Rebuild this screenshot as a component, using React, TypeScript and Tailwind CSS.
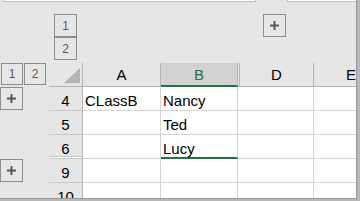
import React from 'react';

// small outline-level button (1 / 2)
const LevelBox = ({ label, size = 'w-[22px] h-[22px]' }: { label: string; size?: string }) => (
  <div className={`${size} shrink-0 border border-[#8c8c8c] flex items-center justify-center text-[12px] leading-none text-[#5a5a5a]`}>
    {label}
  </div>
);

// expand button (+)
const PlusBox = ({ size = 'w-[23px] h-[23px]' }: { size?: string }) => (
  <div className={`${size} shrink-0 border border-[#8c8c8c] flex items-center justify-center`}>
    <svg width="9" height="9" viewBox="0 0 9 9">
      <rect x="3.5" y="0" width="2" height="9" fill="#595959" />
      <rect x="0" y="3.5" width="9" height="2" fill="#595959" />
    </svg>
  </div>
);

type Row = { num: string; a: string; b: string; gutter?: boolean; hiddenBelow?: boolean; selected?: boolean };

const rows: Row[] = [
  { num: '4', a: 'CLassB', b: 'Nancy', gutter: true },
  { num: '5', a: '', b: 'Ted' },
  { num: '6', a: '', b: 'Lucy', hiddenBelow: true, selected: true },
  { num: '9', a: '', b: '', gutter: true },
  { num: '10', a: '', b: '' },
];

export default function App() {
  return (
    <div className="w-[360px] h-[201px] bg-[#b8b8b8] overflow-hidden font-['Liberation_Sans',Arial,sans-serif]">
      <div className="w-[357px] h-[199px] bg-[#e6e6e6] border-r border-b border-[#9a9a9a] overflow-hidden flex flex-col">
        {/* top strip */}
        <div className="flex h-[2px] shrink-0">
          <div className="ml-[3px] w-[253px] bg-white border-x border-b border-[#bfbfbf]" />
          <div className="ml-[31px] flex-1 bg-white border-l border-b border-[#bfbfbf]" />
        </div>

        {/* column outline bar */}
        <div className="flex items-start h-[61px] pt-[12px] shrink-0">
          <div className="ml-[54px] flex flex-col">
            <LevelBox label="1" size="w-[23px] h-[23px]" />
            <LevelBox label="2" size="w-[23px] h-[23px]" />
          </div>
          <div className="ml-[186px]">
            <PlusBox />
          </div>
        </div>

        {/* header row */}
        <div className="flex h-[24px] shrink-0 text-[15px] leading-[17px]">
          <div className="w-[49px] shrink-0 flex items-start gap-[1px] pl-[1px]">
            <LevelBox label="1" />
            <LevelBox label="2" />
          </div>
          <div className="w-[34px] shrink-0 border-r border-b border-[#b4b4b4] flex justify-end items-end pr-[2px] pb-[3px]">
            <svg width="16" height="15" viewBox="0 0 16 15">
              <polygon points="0,15 16,0 16,15" fill="#b4b4b4" />
            </svg>
          </div>
          <div className="w-[78px] shrink-0 border-r border-b border-[#b4b4b4] flex justify-center items-end pb-[3px] text-black">A</div>
          <div className="w-[77px] shrink-0 bg-[#d2d2d2] border-r border-b-2 border-r-[#b4b4b4] border-b-[#217346] flex justify-center items-end pb-[2px] text-[#217346]">B</div>
          <div className="w-[2px] shrink-0 border-r border-b border-[#b4b4b4]" />
          <div className="w-[74px] shrink-0 border-r border-b border-[#b4b4b4] flex justify-center items-end pb-[3px] text-black">D</div>
          <div className="w-[74px] shrink-0 border-b border-[#b4b4b4] flex justify-center items-end pb-[3px] text-black">E</div>
        </div>

        {/* body rows */}
        {rows.map((r) => (
          <div key={r.num} className="flex h-[24px] shrink-0 text-[15px] leading-[17px] text-black">
            <div className="w-[49px] shrink-0 flex items-start">
              {r.gutter && <PlusBox />}
            </div>
            <div
              className={`w-[34px] shrink-0 border-r border-b border-r-[#b4b4b4] border-b-[#c8c8c8] flex justify-center items-end pb-[1px] ${
                r.hiddenBelow ? 'shadow-[inset_0_-1px_0_#ffffff,inset_0_-2px_0_#c8c8c8]' : ''
              }`}
            >
              {r.num}
            </div>
            <div className="w-[78px] shrink-0 bg-white border-r border-b border-[#d4d4d4] flex items-end pl-[2px] pb-[1px]">{r.a}</div>
            <div
              className={`w-[77px] shrink-0 bg-white border-r flex items-end pl-[2px] border-r-[#d4d4d4] ${
                r.selected ? 'border-b-2 border-b-[#217346] pb-0' : 'border-b border-b-[#d4d4d4] pb-[1px]'
              }`}
            >
              {r.b}
            </div>
            <div className="w-[2px] shrink-0 bg-white border-b border-[#d4d4d4]" />
            <div className="w-[74px] shrink-0 bg-white border-r border-b border-[#d4d4d4]" />
            <div className="w-[74px] shrink-0 bg-white border-b border-[#d4d4d4]" />
          </div>
        ))}
      </div>
    </div>
  );
}
